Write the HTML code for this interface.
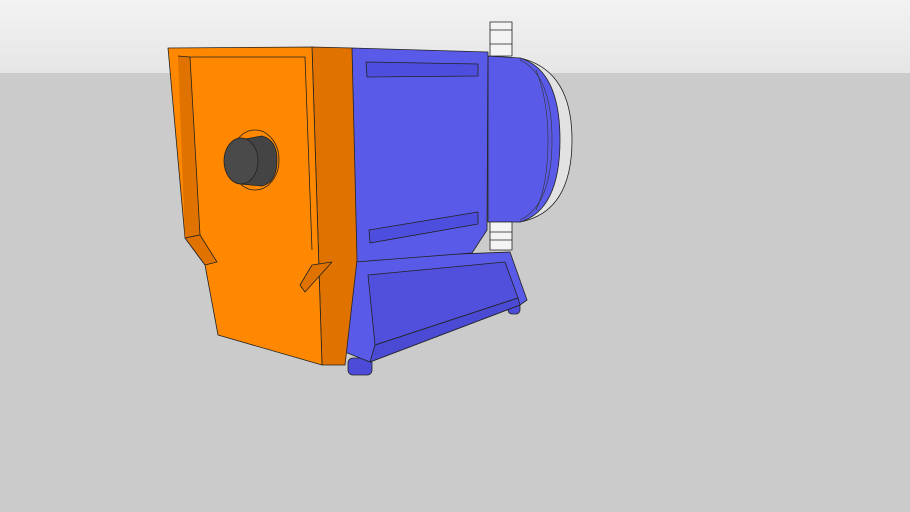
<!DOCTYPE html>
<html><head><style>html,body{margin:0;padding:0;overflow:hidden;background:#cbcbcb}svg{display:block}</style></head>
<body>
<svg width="910" height="512" viewBox="0 0 910 512" xmlns="http://www.w3.org/2000/svg">
<defs>
<linearGradient id="sky" x1="0" y1="0" x2="0" y2="1"><stop offset="0" stop-color="#f2f2f2"/><stop offset="1" stop-color="#e6e6e6"/></linearGradient>
</defs>
<rect width="910" height="73" fill="url(#sky)"/>
<rect y="73" width="910" height="439" fill="#cbcbcb"/>
<g stroke="#222" stroke-width="0.8" stroke-linejoin="round">
<path d="M495,60 L520,58 Q572,70 572,140 Q572,212 520,222 L495,220 Z" fill="#e2e2e2"/>
<path d="M488,56 L520,58 Q560,70 560,140 Q560,210 520,222 L488,222 Z" fill="#5a5ae8"/>
<path d="M520,60 Q552,75 552,140 Q552,205 520,220" fill="none" stroke="#333" stroke-width="0.6"/>
<path d="M536,70 Q548,100 548,140 Q548,185 536,210" fill="none" stroke="#333" stroke-width="0.6"/>
<rect x="490" y="22" width="22" height="34" fill="#f4f4f4"/>
<line x1="490" y1="30" x2="512" y2="30"/><line x1="490" y1="44" x2="512" y2="44"/>
<rect x="490" y="222" width="22" height="28" fill="#f4f4f4"/>
<line x1="490" y1="232" x2="512" y2="232"/><line x1="490" y1="240" x2="512" y2="240"/>
<rect x="508" y="300" width="12" height="14" rx="4" fill="#4c4cd8"/>
<rect x="348" y="358" width="24" height="17" rx="5" fill="#4c4cd8"/>
<path d="M355,258 L510,252 L527,300 L520,305 L370,362 L345,352 Z" fill="#5a5ae8"/>
<path d="M368,275 L505,262 L518,298 L375,345 Z" fill="#5050dc"/>
<path d="M375,345 L518,298 L520,305 L370,362 Z" fill="#4a4ad4"/>
<path d="M352,48 L488,52 L487,230 L472,253 L355,262 Z" fill="#5a5ae8"/>
<path d="M366,62 L478,64 L478,76 L367,77 Z" fill="#4e4ede"/>
<path d="M369,230 L478,212 L478,224 L370,243 Z" fill="#4e4ede"/>
<path d="M312,47 L352,48 L357,260 L345,365 L322,365 Z" fill="#e07200"/>
<path d="M168,48 L312,47 L322,365 L218,335 L205,265 L185,238 Z" fill="#ff8800"/>
<path d="M190,57 L305,57 L312,250" fill="none"/>
<path d="M178,56 L190,57 L200,235 L185,238" fill="#e07200"/>
<path d="M185,238 L200,235 L217,262 L205,265 Z" fill="#e07200"/>
<path d="M300,285 L312,265 L332,262 L305,292 Z" fill="#e07200"/>
<ellipse cx="255" cy="160" rx="24" ry="30" fill="#ff8800"/>
<path d="M240,140 L262,136 Q277,140 277,160 Q277,182 262,186 L240,184 Z" fill="#444"/>
<ellipse cx="241" cy="161" rx="17" ry="23" fill="#4a4a4a"/>
</g>
</svg>
</body></html>
